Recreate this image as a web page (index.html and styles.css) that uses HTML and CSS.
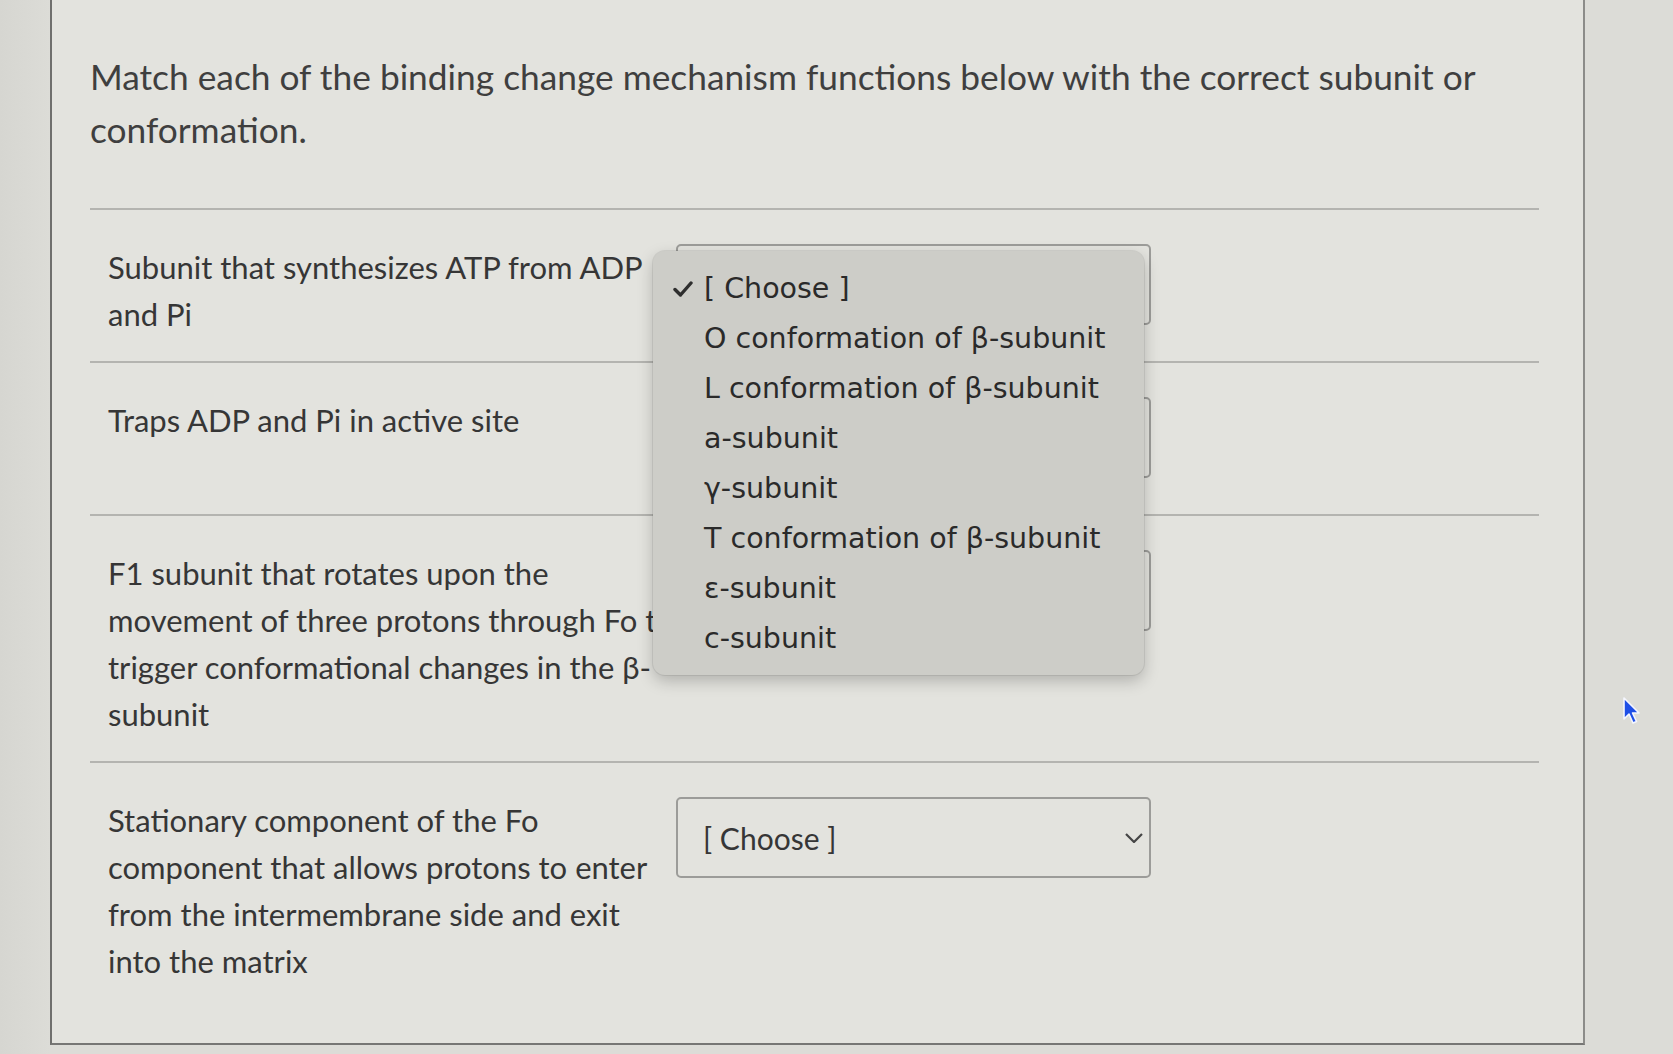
FILE: index.html
```html
<!DOCTYPE html>
<html lang="en">
<head>
<meta charset="utf-8">
<title>Matching question</title>
<link rel="stylesheet" href="styles.css">
</head>
<body>
<div class="screen">
  <div class="card">
    <p class="prompt">Match each of the binding change mechanism functions below with the correct subunit or conformation.</p>
    <div class="rows">
      <div class="row">
        <div class="label">Subunit that synthesizes ATP from ADP<br>and Pi</div>
        <div class="select-wrap">
          <div class="select"></div>
          <ul class="menu">
            <li><svg class="check" viewBox="0 0 20 16" width="20" height="16"><path d="M2 8.5 L7.5 14 L18 2" fill="none" stroke="#2e2e2e" stroke-width="3.4" stroke-linecap="round" stroke-linejoin="round"/></svg>[ Choose ]</li>
            <li>O conformation of β-subunit</li>
            <li>L conformation of β-subunit</li>
            <li>a-subunit</li>
            <li>γ-subunit</li>
            <li>T conformation of β-subunit</li>
            <li>ε-subunit</li>
            <li>c-subunit</li>
          </ul>
        </div>
      </div>
      <div class="row">
        <div class="label">Traps ADP and Pi in active site</div>
        <div class="select-wrap">
          <div class="select"></div>
        </div>
      </div>
      <div class="row">
        <div class="label">F1 subunit that rotates upon the<br>movement of three protons through Fo to<br>trigger conformational changes in the β-<br>subunit</div>
        <div class="select-wrap">
          <div class="select"></div>
        </div>
      </div>
      <div class="row">
        <div class="label">Stationary component of the Fo<br>component that allows protons to enter<br>from the intermembrane side and exit<br>into the matrix</div>
        <div class="select-wrap">
          <div class="select"><span>[ Choose ]</span><svg class="chev" viewBox="0 0 18 10" width="18" height="10"><path d="M1 1 L9 9 L17 1" fill="none" stroke="#454545" stroke-width="2.2"/></svg></div>
        </div>
      </div>
    </div>
  </div>
  <svg class="cursor" viewBox="0 0 20 30" width="20" height="30"><path d="M2 2 L2 23 L7 18 L11 27 L14.5 25.5 L10.5 17 L17 17 Z" fill="#1f4fe6" stroke="#f4f6ff" stroke-width="1.6" stroke-linejoin="round"/></svg>
</div>
</body>
</html>
```

FILE: styles.css
```css
html, body {
  margin: 0;
  padding: 0;
}

body {
  background: #dcdcd7;
  font-family: Lato, "Liberation Sans", sans-serif;
}

.screen {
  position: relative;
  width: 1673px;
  height: 1054px;
  overflow: hidden;
  box-sizing: border-box;
  padding-left: 50px;
  background: linear-gradient(90deg, #d6d6d1 0, #dcdcd7 50px, #dcdcd7 100%);
}

.card {
  width: 1535px;
  height: 1045px;
  box-sizing: border-box;
  background: #e3e3de;
  border-left: 2px solid #6f6f6d;
  border-right: 2px solid #8c8c89;
  border-bottom: 2px solid #767674;
  padding: 50px 44px 0 38px;
}

.prompt {
  margin: 0 0 52px;
  font-size: 35.3px;
  line-height: 53px;
  color: #3f3f3f;
}

.row {
  display: grid;
  grid-template-columns: 550px 475px;
  column-gap: 18px;
  align-items: start;
  border-top: 2px solid #b4b4b0;
  padding: 34px 0 23px 18px;
}

.label {
  font-size: 31px;
  line-height: 47px;
  color: #363636;
  white-space: nowrap;
  min-height: 94px;
}

.select-wrap {
  position: relative;
}

.select {
  height: 81px;
  box-sizing: border-box;
  border: 2px solid #9c9c99;
  border-radius: 5px;
  display: flex;
  align-items: center;
  justify-content: space-between;
  padding: 0 6px 0 25px;
  font-size: 30px;
  color: #363636;
  background: #e3e3de;
}

.chev {
  display: block;
}

.menu {
  position: absolute;
  left: -23px;
  top: 7px;
  width: 491px;
  height: 424px;
  box-sizing: border-box;
  margin: 0;
  padding: 13px 0 11px;
  list-style: none;
  background: #cdcdc8;
  border-radius: 12px;
  box-shadow: 0 6px 16px rgba(0, 0, 0, 0.22), 0 0 0 1px rgba(0, 0, 0, 0.07);
  font-family: "DejaVu Sans", sans-serif;
  font-size: 28.5px;
  color: #2a2a2a;
  z-index: 5;
}

.menu li {
  position: relative;
  height: 50px;
  line-height: 50px;
  padding-left: 51px;
  white-space: nowrap;
}

.check {
  position: absolute;
  left: 20px;
  top: 17px;
}

.cursor {
  position: absolute;
  left: 1622px;
  top: 696px;
}
```
